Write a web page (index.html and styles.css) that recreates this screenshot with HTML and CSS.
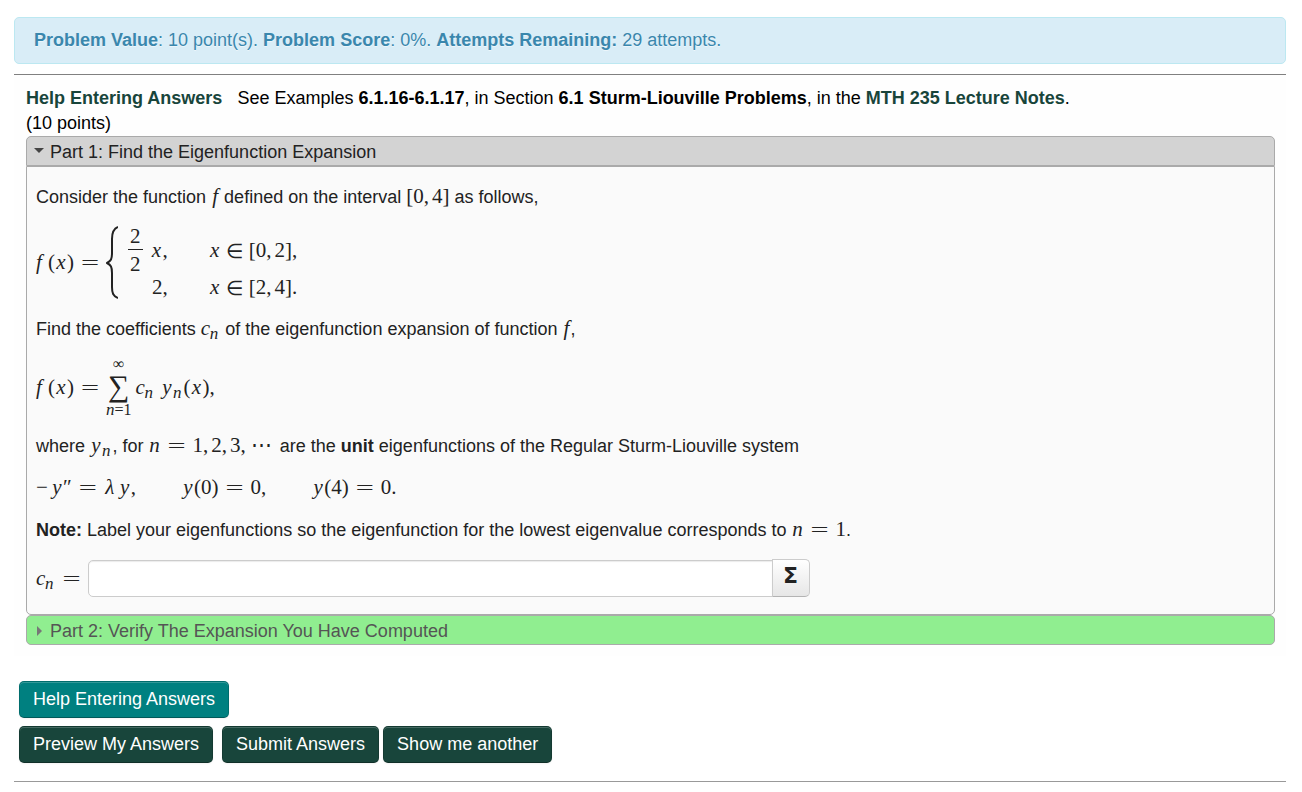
FILE: index.html
```html
<!DOCTYPE html>
<html lang="en">
<head>
<meta charset="utf-8">
<title>Eigenfunction Expansion</title>
<link rel="stylesheet" href="styles.css">
</head>
<body>
<main class="page">
  <div class="alert"><b>Problem Value</b>: 10 point(s). <b>Problem Score</b>: 0%. <b>Attempts Remaining:</b> 29 attempts.</div>
  <section class="problem">
    <div class="intro"><a href="#help">Help Entering Answers</a> &nbsp; See Examples <b>6.1.16-6.1.17</b>, in Section <b>6.1 Sturm-Liouville Problems</b>, in the <a href="#notes">MTH 235 Lecture Notes</a>.<br>(10 points)</div>
    <div class="accordion">
      <button class="heading open" type="button" aria-expanded="true"><svg class="caret" viewBox="0 0 10 10"><path d="M0 2H10L5 7Z"/></svg>Part 1: Find the Eigenfunction Expansion</button>
      <div class="panel">
        <p>Consider the function <span class="math"><i class="f">f</i></span> defined on the interval <span class="math">[0,<s></s>4]</span> as follows,</p>
        <div class="math formula cases-formula">
          <span><i class="lead">f</i>(<i>x</i>)<span class="rel">=</span></span>
          <svg class="brace" viewBox="0 0 12 73"><path d="M12 1C7 3 6 7 6 13V27C6 33 5 35 1 37C5 39 6 41 6 47V61C6 67 7 70 12 72"/></svg>
          <div class="cases">
            <span class="value"><span class="frac"><span>2</span><span>2</span></span><i>x</i>,</span>
            <span><i>x</i><span class="rel in">∈</span>[0,<s></s>2],</span>
            <span>2,</span>
            <span><i>x</i><span class="rel in">∈</span>[2,<s></s>4].</span>
          </div>
        </div>
        <p>Find the coefficients <span class="math"><i class="c">c</i><sub>n</sub></span> of the eigenfunction expansion of function <span class="math"><i class="f">f</i></span>,</p>
        <div class="math formula sum-formula">
          <span><i class="lead">f</i>(<i>x</i>)<span class="rel">=</span></span>
          <span class="sum"><span class="limit">∞</span><span class="sigma">∑</span><span class="limit"><em>n</em>=1</span></span>
          <span><i class="c">c</i><sub>n</sub><s></s><s></s><i>y</i><sub>n</sub>(<i>x</i>),</span>
        </div>
        <p>where <span class="math"><i>y</i><sub>n</sub></span>, for <span class="math"><i>n</i><span class="rel">=</span>1,<s></s>2,<s></s>3,<s></s><span class="dots">⋯</span></span> are the <b>unit</b> eigenfunctions of the Regular Sturm-Liouville system</p>
        <div class="math formula system">
          <span><span class="minus">−</span><i>y</i>″<span class="rel">=</span><i>λ</i><s></s><i>y</i>,</span>
          <span><i>y</i>(0)<span class="rel">=</span>0,</span>
          <span><i>y</i>(4)<span class="rel">=</span>0.</span>
        </div>
        <p><b>Note:</b> Label your eigenfunctions so the eigenfunction for the lowest eigenvalue corresponds to <span class="math"><i>n</i><span class="rel">=</span>1</span>.</p>
        <div class="answer">
          <label class="math" for="answer"><i class="c">c</i><sub>n</sub><span class="rel">=</span></label>
          <input id="answer" type="text"><button class="editor" type="button" aria-label="Equation editor">Σ</button>
        </div>
      </div>
      <button class="heading closed" type="button" aria-expanded="false"><svg class="caret" viewBox="0 0 10 10"><path d="M3 0V10L8 5Z"/></svg>Part 2: Verify The Expansion You Have Computed</button>
    </div>
  </section>
  <div class="actions">
    <button class="btn teal" type="button">Help Entering Answers</button>
    <div class="row">
      <button class="btn preview" type="button">Preview My Answers</button>
      <button class="btn" type="button">Submit Answers</button>
      <button class="btn" type="button">Show me another</button>
    </div>
  </div>
</main>
</body>
</html>
```
FILE: styles.css
```css
* { box-sizing: border-box; }
body { margin: 0; background: #fff; color: #000; font: 18px/25px "Liberation Sans", Arial, sans-serif; }
button, input { font: inherit; }
.page { padding: 17px 16px 0 14px; }
.alert { padding: 10px 19px; border: 1px solid #bce8f1; border-radius: 5px; background: #d9edf7; color: #3a87ad; text-shadow: 0 1px 0 rgba(255,255,255,.5); }
.problem { margin-top: 10px; padding: 11px 11px; border-top: 1px solid #808080; background: #fefefe; }
.intro { padding-left: 1px; }
a { color: #18453b; font-weight: bold; text-decoration: none; }
.accordion { margin-left: 1px; }
.heading { display: flex; align-items: center; width: 100%; height: 30px; padding: 2px 7px 0; border: 1px solid #aaa; gap: 6px; text-align: left; }
.open { border-radius: 5px 5px 0 0; background: #d3d3d3; color: #222; }
.closed { border-radius: 5px; padding-top: 3px; background: #90ee90; color: #555; }
.caret { width: 10px; height: 10px; margin-bottom: 2px; fill: #444; }
.closed .caret { fill: #777; }
.panel { display: flex; flex-direction: column; gap: 17px; padding: 17px 9px 17px; border: 1px solid #aaa; border-radius: 0 0 5px 5px; background: #fafafa; color: #222; }
p { margin: 0; height: 25px; line-height: 27px; }
.math { font: 21px/25px "Liberation Serif", "Times New Roman", serif; white-space: nowrap; }
p .math { line-height: 20px; }
.math i { display: inline-block; width: 12px; text-align: center; }
.math .c { width: 9px; }
.math .f { width: 8px; }
.math .lead { text-align: left; }
s { display: inline-block; width: 3px; text-decoration: none; }
sub { font-size: 17px; font-style: italic; line-height: 0; vertical-align: -4px; margin-right: 2px; }
.rel { display: inline-block; width: 32px; text-align: center; font: 200 24px/20px "DejaVu Sans", sans-serif; vertical-align: -1px; }
.rel.in { width: 28px; font: 20px/20px "Liberation Serif", serif; }
.formula { display: flex; }
.cases-formula { height: 73px; align-items: center; }
.brace { width: 12px; height: 73px; fill: none; stroke: #222; stroke-width: 2; }
.cases { display: grid; grid-template-columns: auto auto; column-gap: 41px; padding: 2px 0 0 10px; justify-items: end; align-items: center; grid-template-rows: 47px 27px; }
.value { display: flex; align-items: center; }
.frac { display: flex; flex-direction: column; align-items: center; margin-right: 8px; }
.frac span { height: 26px; padding: 0 2px; line-height: 25px; }
.frac span:first-child { border-bottom: 1px solid #222; }
.frac span:last-child { line-height: 29px; }
.sum-formula { height: 58px; align-items: center; }
.sum { display: flex; flex-direction: column; align-items: center; margin-right: 4px; }
.limit { font-size: 16px; line-height: 12px; }
.limit em { font-size: 17px; }
.sigma { font-size: 30px; line-height: 31px; padding-bottom: 3px; }
.dots { display: inline-block; width: 26px; text-align: center; }
.system { gap: 46px; }
.minus { display: inline-block; width: 15px; }
.answer { display: flex; align-items: center; height: 38px; }
.answer input { flex: 0 1 685px; min-width: 0; height: 37px; border: 1px solid #ccc; border-radius: 5px 0 0 5px; background: #fff; box-shadow: inset 0 1px 1px rgba(0,0,0,.08); }
.editor { width: 38px; height: 38px; margin-left: -1px; padding: 0 0 4px; border: 1px solid #ccc; border-bottom-color: #b3b3b3; border-radius: 0 5px 5px 0; background: linear-gradient(#fff, #e6e6e6); color: #222; font: bold 22px/30px "DejaVu Sans", sans-serif; }
.actions { display: flex; flex-direction: column; align-items: flex-start; gap: 8px; padding: 25px 5px 18px; border-bottom: 1px solid #999; }
.row { display: flex; flex-wrap: wrap; gap: 4px; }
.btn { height: 37px; padding: 0 13px 1px; border: 1px solid rgba(0,0,0,.15); border-bottom-color: rgba(0,0,0,.3); border-radius: 5px; background: #18453b; color: #fff; box-shadow: inset 0 1px 0 rgba(255,255,255,.2), 0 1px 2px rgba(0,0,0,.05); }
.teal { background: #008080; }
.preview { margin-right: 5px; }
```
